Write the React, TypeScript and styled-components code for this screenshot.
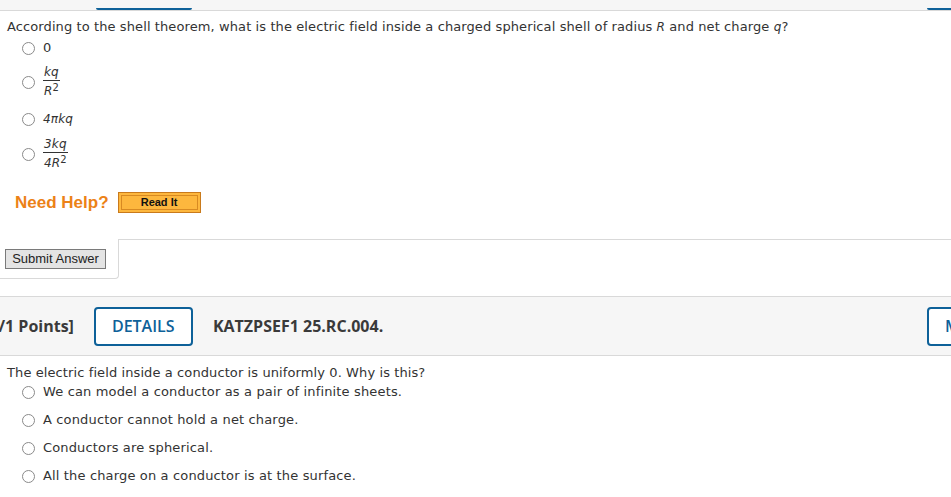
import styled, { createGlobalStyle } from 'styled-components';

const blue = "#0e6199";
const text = "#333333";
const line = "#d9d9d9";

const GlobalStyle = createGlobalStyle`
  html, body {
    margin: 0;
    padding: 0;
    background: #ffffff;
    overflow: hidden;
  }
  body {
    font-family: "DejaVu Sans", Verdana, sans-serif;
    color: ${text};
  }
`;

const Page = styled.div`
  width: 951px;
  height: 497px;
  overflow: hidden;
`;

const TopBand = styled.div`
  height: 10px;
  background: #f6f6f6;
  border-bottom: 1px solid ${line};
  display: flex;
  align-items: flex-end;
  justify-content: space-between;
  padding-left: 96px;
  margin-right: -30px;
`;

const ButtonStub = styled.div<{ $width: number }>`
  width: ${p => p.$width}px;
  height: 2px;
  background: ${blue};
  border-radius: 0 0 3px 3px;
`;

const Question = styled.div<{ $top: number }>`
  padding: ${p => p.$top}px 7px 0;
`;

const Prompt = styled.div`
  font-size: 13px;
  line-height: 16px;
  letter-spacing: 0.1px;
`;

const Options = styled.div`
  display: flex;
  flex-direction: column;
  padding-left: 15px;
`;

const Option = styled.label<{ $top: number }>`
  display: flex;
  align-items: center;
  gap: 8px;
  margin-top: ${p => p.$top}px;
  font-size: 13px;
  line-height: 16px;
  letter-spacing: 0.15px;
`;

const Radio = styled.span`
  width: 11px;
  height: 11px;
  border: 1px solid #8a8a8a;
  border-radius: 50%;
  background: #fff;
  flex: none;
`;

const MathVar = styled.i`
  font-family: "DejaVu Sans", Verdana, sans-serif;
  font-style: oblique;
  font-size: 12px;
`;

const Sup = styled.sup`
  font-size: 10px;
  line-height: 0;
  vertical-align: 4px;
  font-style: normal;
`;

const Fraction = styled.span`
  display: inline-flex;
  flex-direction: column;
  align-items: center;
  font-size: 12px;
  line-height: 13px;
`;

const Numerator = styled.span`
  padding: 0 1px 1px;
  border-bottom: 1px solid ${text};
`;

const Denominator = styled.span`
  padding-top: 4px;
`;

const HelpRow = styled.div`
  display: flex;
  align-items: center;
  gap: 9px;
  margin-top: 22px;
  padding-left: 15px;
`;

const HelpLabel = styled.span`
  font-family: "Liberation Sans", Arial, sans-serif;
  font-weight: bold;
  font-size: 17px;
  color: #ec8217;
`;

const ReadIt = styled.button`
  width: 83px;
  height: 21px;
  padding: 2px;
  background: #fdb73e;
  border: 1px solid #c97a1c;
  cursor: pointer;
  display: flex;
`;

const ReadItInner = styled.span`
  flex: 1;
  border: 1px solid #d88a22;
  font-family: "Liberation Sans", Arial, sans-serif;
  font-weight: bold;
  font-size: 11px;
  line-height: 13px;
  color: #111;
  text-align: center;
`;

const SubmitRow = styled.div`
  display: flex;
  margin-top: 26px;
`;

const SubmitCell = styled.div`
  width: 119px;
  height: 40px;
  box-sizing: border-box;
  border-right: 1px solid ${line};
  border-bottom: 1px solid ${line};
  border-bottom-right-radius: 4px;
  padding-left: 5px;
  display: flex;
  align-items: center;
`;

const SubmitButton = styled.button`
  height: 20px;
  width: 101px;
  padding: 0;
  background: #e4e4e4;
  border: 1px solid #7a7a7a;
  font-family: "Liberation Sans", Arial, sans-serif;
  font-size: 13px;
  color: #222;
`;

const Filler = styled.div`
  flex: 1;
  border-top: 1px solid ${line};
`;

const InfoBand = styled.div`
  margin-top: 17px;
  margin-right: -86px;
  height: 58px;
  background: #f6f6f6;
  border-top: 1px solid ${line};
  border-bottom: 1px solid ${line};
  display: flex;
  align-items: center;
  font-family: "Open Sans", sans-serif;
  font-size: 16px;
  font-weight: 700;
  color: #3a3a3a;
`;

const Points = styled.span`
  margin-left: -16px;
`;

const OutlineButton = styled.button<{ $width: number }>`
  width: ${p => p.$width}px;
  height: 39px;
  margin-left: 20px;
  background: #ffffff;
  border: 2px solid ${blue};
  border-radius: 4px;
  font-family: "Open Sans", sans-serif;
  font-size: 16px;
  font-weight: 600;
  color: ${blue};
  flex: none;
  text-align: left;
  padding-left: 16px;
`;

const Code = styled.span`
  margin-left: 20px;
  flex: 1;
`;

export default function App() {
  return (
    <Page>
      <GlobalStyle />
      <TopBand>
        <ButtonStub $width={96} />
        <ButtonStub $width={54} />
      </TopBand>

      <Question $top={8}>
        <Prompt>
          According to the shell theorem, what is the electric field inside a charged spherical shell of radius{" "}
          <MathVar>R</MathVar> and net charge <MathVar>q</MathVar>?
        </Prompt>
        <Options>
          <Option $top={5}>
            <Radio />
            <span>0</span>
          </Option>
          <Option $top={10}>
            <Radio />
            <Fraction>
              <Numerator><MathVar>kq</MathVar></Numerator>
              <Denominator><MathVar>R</MathVar><Sup>2</Sup></Denominator>
            </Fraction>
          </Option>
          <Option $top={13}>
            <Radio />
            <span><MathVar>4πkq</MathVar></span>
          </Option>
          <Option $top={11}>
            <Radio />
            <Fraction>
              <Numerator><MathVar>3kq</MathVar></Numerator>
              <Denominator><MathVar>4R</MathVar><Sup>2</Sup></Denominator>
            </Fraction>
          </Option>
        </Options>
      </Question>

      <HelpRow>
        <HelpLabel>Need Help?</HelpLabel>
        <ReadIt>
          <ReadItInner>Read It</ReadItInner>
        </ReadIt>
      </HelpRow>

      <SubmitRow>
        <SubmitCell>
          <SubmitButton>Submit Answer</SubmitButton>
        </SubmitCell>
        <Filler />
      </SubmitRow>

      <InfoBand>
        <Points>[0/1 Points]</Points>
        <OutlineButton $width={99}>DETAILS</OutlineButton>
        <Code>KATZPSEF1 25.RC.004.</Code>
        <OutlineButton $width={110}>MY NOTES</OutlineButton>
      </InfoBand>

      <Question $top={9}>
        <Prompt>The electric field inside a conductor is uniformly 0. Why is this?</Prompt>
        <Options>
          <Option $top={3}>
            <Radio />
            <span>We can model a conductor as a pair of infinite sheets.</span>
          </Option>
          <Option $top={12}>
            <Radio />
            <span>A conductor cannot hold a net charge.</span>
          </Option>
          <Option $top={12}>
            <Radio />
            <span>Conductors are spherical.</span>
          </Option>
          <Option $top={12}>
            <Radio />
            <span>All the charge on a conductor is at the surface.</span>
          </Option>
        </Options>
      </Question>
    </Page>
  );
}
